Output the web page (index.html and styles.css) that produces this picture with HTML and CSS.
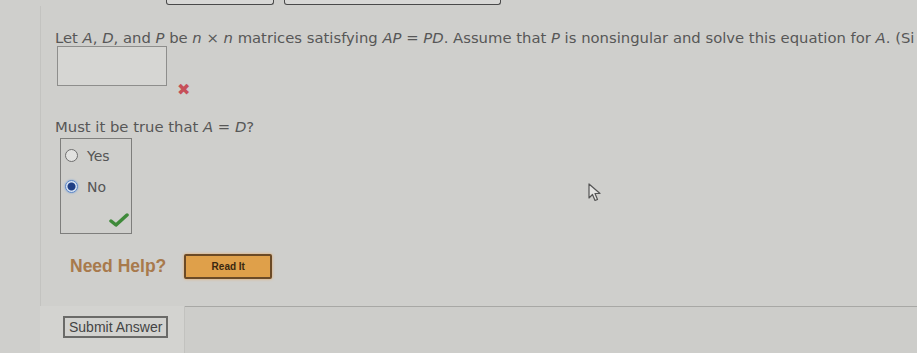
FILE: index.html
```html
<!DOCTYPE html>
<html lang="en">
<head>
    <meta charset="UTF-8">
    <title>Question</title>
    <link rel="stylesheet" href="styles.css">
</head>
<body>
    <div class="top-tabs">
        <div class="tab tab-one"></div>
        <div class="tab tab-two"></div>
    </div>

    <div class="question">
        <p class="prompt">Let <i>A</i>, <i>D</i>, and <i>P</i> be <i>n</i> &times; <i>n</i> matrices satisfying <i>AP</i> = <i>PD</i>. Assume that <i>P</i> is nonsingular and solve this equation for <i>A</i>. (Si</p>

        <div class="answer-row">
            <div class="answer-box"></div>
            <span class="wrong">&#10006;</span>
        </div>

        <p class="prompt second">Must it be true that <i>A</i> = <i>D</i>?</p>

        <div class="choices">
            <label class="choice"><span class="radio"></span>Yes</label>
            <label class="choice"><span class="radio checked"></span>No</label>
            <div class="check-row">
                <svg width="20" height="14" viewBox="0 0 20 14">
                    <path d="M2 8 L7 12 L18 2" fill="none" stroke="#3f8a3a" stroke-width="3.5" stroke-linecap="round" stroke-linejoin="round"/>
                </svg>
            </div>
        </div>

        <div class="help-row">
            <span class="need-help">Need Help?</span>
            <button class="read-it">Read It</button>
        </div>
    </div>

    <div class="bottom">
        <div class="submit-panel">
            <button class="submit">Submit Answer</button>
        </div>
        <div class="next-panel"></div>
    </div>

    <svg class="cursor" width="14" height="20" viewBox="0 0 14 20">
        <path d="M1 1 L1 15 L4.5 11.5 L7 17.5 L9.5 16.5 L7 10.5 L12 10.5 Z" fill="#e4e4e2" stroke="#555" stroke-width="1.2" stroke-linejoin="round"/>
    </svg>
</body>
</html>
```

FILE: styles.css
```css
body {
    margin: 0;
    width: 917px;
    height: 353px;
    overflow: hidden;
    position: relative;
    background-color: #cfcfcc;
    font-family: "DejaVu Sans", Verdana, sans-serif;
    color: #5a5a5a;
}

.top-tabs {
    display: flex;
    gap: 10px;
    padding-left: 166px;
    height: 6px;
}

.tab {
    height: 4px;
    border: 1px solid #4a4a4a;
    border-top: none;
    border-radius: 0 0 3px 3px;
    background-color: #d8d8d6;
}

.tab-one {
    width: 106px;
}

.tab-two {
    width: 215px;
}

.question {
    margin-left: 40px;
    border-left: 1px solid #c3c3c0;
    padding-left: 14px;
    padding-top: 23px;
    height: 277px;
}

.prompt {
    margin: 0;
    font-size: 14.8px;
    white-space: nowrap;
    color: #575757;
}

.prompt i {
    font-style: italic;
}

.answer-row {
    display: flex;
    align-items: flex-end;
    margin-top: 0;
    margin-left: 2px;
}

.answer-box {
    width: 108px;
    height: 38px;
    border: 1px solid #8e8e8c;
    background-color: #d6d6d3;
}

.wrong {
    color: #c65058;
    font-size: 16px;
    font-weight: bold;
    margin-left: 10px;
    margin-bottom: -13px;
}

.second {
    margin-top: 32px;
}

.choices {
    width: 70px;
    height: 94px;
    margin-top: 3px;
    margin-left: 5px;
    border: 1px solid #7e7e7c;
}

.choice {
    display: flex;
    align-items: center;
    gap: 9px;
    font-size: 14px;
    padding-left: 2px;
    height: 31px;
    color: #555;
}

.choice:first-child {
    margin-top: 1px;
}

.radio {
    width: 11px;
    height: 11px;
    border: 1px solid #6e6e6e;
    border-radius: 50%;
    background-color: #e2e2e0;
    margin-left: 2px;
}

.radio.checked {
    border-color: #5a86c8;
    background: radial-gradient(circle, #1f3f85 0, #1f3f85 3.5px, #d6e2f2 4.5px);
    box-shadow: 0 0 2px #6f9ad8;
}

.check-row {
    display: flex;
    justify-content: flex-end;
    padding-right: 2px;
    margin-top: 11px;
}

.help-row {
    display: flex;
    align-items: center;
    gap: 18px;
    margin-top: 20px;
    margin-left: 15px;
}

.need-help {
    font-family: "Liberation Sans", Arial, sans-serif;
    font-weight: bold;
    font-size: 17.5px;
    color: #a87a4c;
}

.read-it {
    width: 88px;
    height: 25px;
    font-family: "Liberation Sans", Arial, sans-serif;
    font-weight: bold;
    font-size: 10px;
    color: #3a2810;
    background-color: #dfa04a;
    border: 2px solid #6b4a26;
    box-shadow: 0 0 3px #e8a860;
    border-radius: 2px;
}

.bottom {
    display: flex;
    margin-left: 40px;
}

.submit-panel {
    width: 145px;
    height: 47px;
    background-color: #d3d3d0;
    border-right: 1px solid #c2c2bf;
    padding: 10px 0 0 23px;
    box-sizing: border-box;
}

.submit {
    font-family: "Liberation Sans", Arial, sans-serif;
    font-size: 14px;
    color: #444;
    background-color: #d2d2cf;
    border: 2px solid #6a6a68;
    padding: 1px 4px;
    height: 22px;
}

.next-panel {
    flex: 1;
    border-top: 1px solid #a8a8a5;
    background-color: #cdcdca;
}

.cursor {
    position: absolute;
    left: 588px;
    top: 183px;
}
```
